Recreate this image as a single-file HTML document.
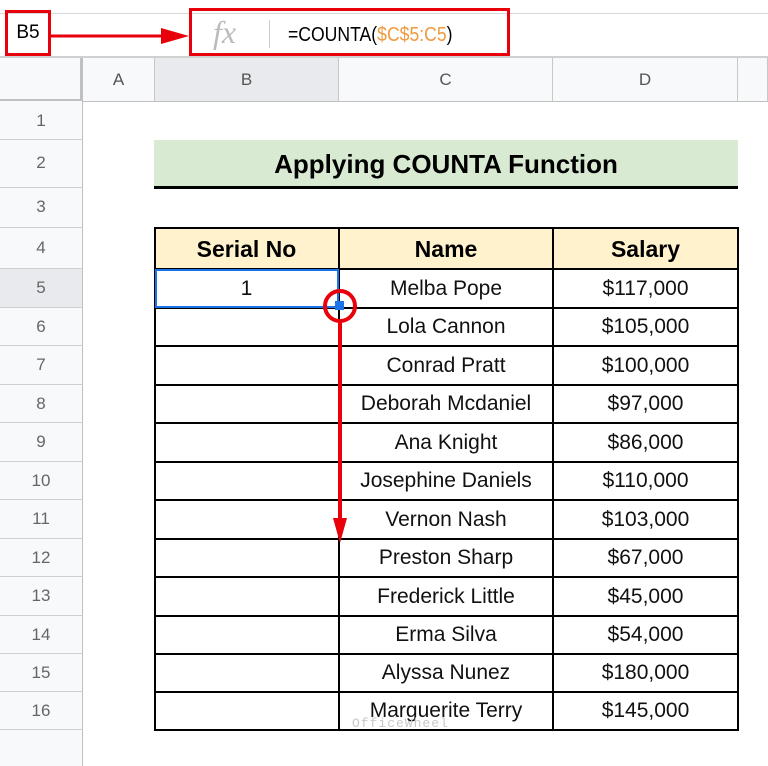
<!DOCTYPE html>
<html><head><style>
body{margin:0;width:768px;height:766px;background:#fff;position:relative;overflow:hidden;font-family:"Liberation Sans",Arial,sans-serif}
.a{position:absolute}
.rh{position:absolute;left:0;width:83px;background:#f8f9fa;border-right:1px solid #c0c0c0;border-bottom:1px solid #d0d0d0;color:#666;font-size:17px;text-align:center;box-sizing:border-box}
.ch{position:absolute;top:58px;height:44px;line-height:44px;background:#f8f9fa;border-right:1px solid #c8c8c8;border-bottom:1px solid #c0c0c0;color:#555;font-size:17px;text-align:center;box-sizing:border-box}
.r{position:absolute;left:154px;width:584px;display:flex;font-size:21px;color:#111;text-align:center}
.r div{flex:none}
.r div:nth-child(1){width:185px}.r div:nth-child(2){width:214px}.r div:nth-child(3){width:185px}
.h{background:#fff2cc;font-weight:bold;font-size:23px;color:#000}
.hl{position:absolute;left:154px;width:584px;height:2px;background:#000}
.vl{position:absolute;top:227px;width:2px;height:504px;background:#000}
</style></head><body>
<div class="a" style="left:0;top:13px;width:768px;height:1px;background:#d8d8d8"></div>
<div class="a" style="left:0;top:56px;width:768px;height:2px;background:#d0d0d0"></div>
<div class="a" style="left:5px;top:10px;width:40px;height:40px;border:3px solid #e8000b;font-size:19px;line-height:40px;text-align:center;color:#000">B5</div>
<svg class="a" style="left:51px;top:24px" width="140" height="26"><line x1="0" y1="12" x2="115" y2="12" stroke="#e8000b" stroke-width="3"/><polygon points="110,4 138,12 110,20" fill="#e8000b"/></svg>
<div class="a" style="left:189px;top:8px;width:315px;height:42px;border:3px solid #e8000b"></div>
<div class="a" style="left:213px;top:14px;font-family:'Liberation Serif',serif;font-style:italic;font-size:32px;color:#bbb;line-height:36px">fx</div>
<div class="a" style="left:269px;top:20px;width:1px;height:28px;background:#ccc"></div>
<div class="a" style="left:288px;top:24px;font-size:20px;color:#000;transform:scaleX(.88);transform-origin:left">=COUNTA(<span style="color:#f09a3e">$C$5:C5</span>)</div>
<div class="rh" style="top:58px;height:44px;border-right:3px solid #c0c0c0;border-bottom:3px solid #c0c0c0"></div>
<div class="ch" style="left:83px;width:72px">A</div>
<div class="ch" style="left:155px;width:184px;background:#e8eaed">B</div>
<div class="ch" style="left:339px;width:214px">C</div>
<div class="ch" style="left:553px;width:185px">D</div>
<div class="ch" style="left:738px;width:30px"></div>
<div class="rh" style="top:101px;height:39px;line-height:39px">1</div>
<div class="rh" style="top:140px;height:48px;line-height:46px">2</div>
<div class="rh" style="top:188px;height:40px;line-height:38px">3</div>
<div class="rh" style="top:228px;height:41px;line-height:40px">4</div>
<div class="rh" style="top:269px;height:39px;line-height:38px;background:#e8eaed">5</div>
<div class="rh" style="top:308px;height:38px;line-height:37px">6</div>
<div class="rh" style="top:346px;height:39px;line-height:38px">7</div>
<div class="rh" style="top:385px;height:38px;line-height:37px">8</div>
<div class="rh" style="top:423px;height:39px;line-height:38px">9</div>
<div class="rh" style="top:462px;height:38px;line-height:37px">10</div>
<div class="rh" style="top:500px;height:39px;line-height:38px">11</div>
<div class="rh" style="top:539px;height:38px;line-height:37px">12</div>
<div class="rh" style="top:577px;height:39px;line-height:38px">13</div>
<div class="rh" style="top:616px;height:38px;line-height:37px">14</div>
<div class="rh" style="top:654px;height:38px;line-height:37px">15</div>
<div class="rh" style="top:692px;height:38px;line-height:37px">16</div>
<div class="rh" style="top:730px;height:36px;border-bottom:none"></div>
<div class="a" style="left:154px;top:140px;width:584px;height:46px;background:#d9ead3;border-bottom:3px solid #000;font-size:26px;font-weight:bold;text-align:center;line-height:48px;color:#000">Applying COUNTA Function</div>

<div class="r h" style="top:227px;height:42px;line-height:44px"><div>Serial No</div><div>Name</div><div>Salary</div></div>
<div class="r" style="top:269px;line-height:39px"><div>1</div><div>Melba Pope</div><div>$117,000</div></div>
<div class="r" style="top:308px;line-height:38px"><div></div><div>Lola Cannon</div><div>$105,000</div></div>
<div class="r" style="top:346px;line-height:39px"><div></div><div>Conrad Pratt</div><div>$100,000</div></div>
<div class="r" style="top:385px;line-height:38px"><div></div><div>Deborah Mcdaniel</div><div>$97,000</div></div>
<div class="r" style="top:423px;line-height:39px"><div></div><div>Ana Knight</div><div>$86,000</div></div>
<div class="r" style="top:462px;line-height:38px"><div></div><div>Josephine Daniels</div><div>$110,000</div></div>
<div class="r" style="top:500px;line-height:39px"><div></div><div>Vernon Nash</div><div>$103,000</div></div>
<div class="r" style="top:539px;line-height:38px"><div></div><div>Preston Sharp</div><div>$67,000</div></div>
<div class="r" style="top:577px;line-height:39px"><div></div><div>Frederick Little</div><div>$45,000</div></div>
<div class="r" style="top:616px;line-height:38px"><div></div><div>Erma Silva</div><div>$54,000</div></div>
<div class="r" style="top:654px;line-height:38px"><div></div><div>Alyssa Nunez</div><div>$180,000</div></div>
<div class="r" style="top:692px;line-height:38px"><div></div><div>Marguerite Terry</div><div>$145,000</div></div>

<div class="hl" style="top:227px"></div>
<div class="hl" style="top:268px"></div>
<div class="hl" style="top:307px"></div>
<div class="hl" style="top:345px"></div>
<div class="hl" style="top:384px"></div>
<div class="hl" style="top:422px"></div>
<div class="hl" style="top:461px"></div>
<div class="hl" style="top:499px"></div>
<div class="hl" style="top:538px"></div>
<div class="hl" style="top:576px"></div>
<div class="hl" style="top:615px"></div>
<div class="hl" style="top:653px"></div>
<div class="hl" style="top:691px"></div>
<div class="hl" style="top:729px"></div>
<div class="vl" style="left:154px"></div>
<div class="vl" style="left:338px"></div>
<div class="vl" style="left:552px"></div>
<div class="vl" style="left:737px"></div>

<div class="a" style="left:155px;top:269px;width:180px;height:35px;border:2px solid #1a73e8"></div>
<svg class="a" style="left:320px;top:288px" width="40" height="260">
<circle cx="20" cy="18" r="15" fill="none" stroke="#e8000b" stroke-width="4"/>
<rect x="15" y="13" width="9" height="9" fill="#1a73e8"/>
<line x1="20" y1="33" x2="20" y2="235" stroke="#e8000b" stroke-width="4"/>
<polygon points="13,230 27,230 20,255" fill="#e8000b"/>
</svg>
<div class="a" style="left:352px;top:716px;font-family:'Liberation Mono',monospace;font-size:13px;color:#c8c8c8;letter-spacing:1px">OfficeWheel</div>
</body></html>
